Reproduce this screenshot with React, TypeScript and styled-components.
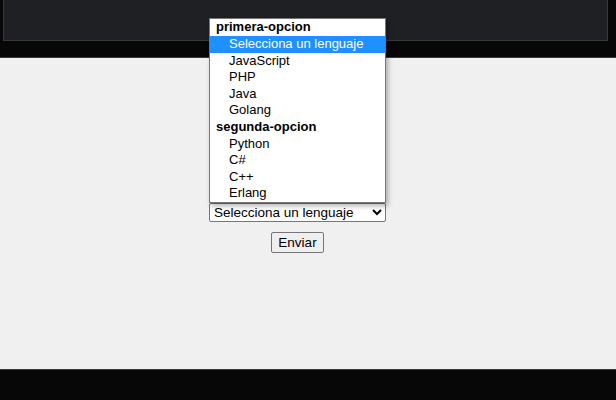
import React from 'react';
import styled, { createGlobalStyle } from 'styled-components';

const GlobalStyle = createGlobalStyle`
  html, body {
    margin: 0;
    padding: 0;
    background: #070707;
    font-family: "Liberation Sans", Arial, sans-serif;
  }
`;

const Shell = styled.div`
  display: flex;
  flex-direction: column;
  width: 616px;
  height: 400px;
  overflow: hidden;
`;

const TopBar = styled.div`
  display: flex;
  height: 41px;
  padding: 0 8px 0 3px;
  box-sizing: border-box;
  background: #070707;
`;

const TopPanel = styled.div`
  flex: 1;
  background: #1f2024;
  border: 1px solid #3a3a3c;
  border-top: none;
`;

const Band = styled.div`
  height: 17px;
  box-sizing: border-box;
  background: #070707;
  border-bottom: 1px solid #3a3a3c;
`;

const Main = styled.main`
  flex: 1;
  display: flex;
  flex-direction: column;
  align-items: center;
  padding: 145px 21px 0 0;
  background: #f0f0f0;
`;

const Footer = styled.footer`
  height: 31px;
  box-sizing: border-box;
  background: #070707;
  border-top: 1px solid #3a3a3c;
`;

const SelectWrap = styled.div`
  position: relative;
  width: 177px;
`;

const LanguageSelect = styled.select`
  display: block;
  width: 177px;
  height: 19px;
  margin: 0;
  padding: 0;
  box-sizing: border-box;
  border: 1px solid #767676;
  border-radius: 2px;
  background: #fff;
  color: #000;
  font-family: "Liberation Sans", Arial, sans-serif;
  font-size: 13.5px;
`;

const Dropdown = styled.ul`
  position: absolute;
  left: 0;
  bottom: 100%;
  width: 100%;
  margin: 0;
  padding: 0;
  list-style: none;
  box-sizing: border-box;
  background: #fff;
  border: 1px solid #767676;
  box-shadow: 2px 3px 5px rgba(0, 0, 0, 0.3);
  font-size: 13px;
  color: #000;
`;

const Row = styled.li<{ $group?: boolean; $active?: boolean }>`
  height: 16.6px;
  line-height: 16.6px;
  padding-left: ${(p) => (p.$group ? '6px' : '19px')};
  font-weight: ${(p) => (p.$group ? 700 : 400)};
  background: ${(p) => (p.$active ? '#1e90ff' : 'transparent')};
  color: ${(p) => (p.$active ? '#fff' : '#000')};
  white-space: nowrap;
`;

const SendButton = styled.button`
  margin-top: 10px;
  width: 53px;
  height: 21px;
  padding: 0;
  border: 1px solid #767676;
  border-radius: 2px;
  background: #efefef;
  color: #000;
  font-family: "Liberation Sans", Arial, sans-serif;
  font-size: 13.5px;
`;

const groups = [
  {
    label: 'primera-opcion',
    options: ['Selecciona un lenguaje', 'JavaScript', 'PHP', 'Java', 'Golang'],
  },
  {
    label: 'segunda-opcion',
    options: ['Python', 'C#', 'C++', 'Erlang'],
  },
];

const App: React.FC = () => {
  return (
    <Shell>
      <GlobalStyle />
      <TopBar>
        <TopPanel />
      </TopBar>
      <Band />
      <Main>
        <SelectWrap>
          <Dropdown>
            {groups.map((g) => (
              <React.Fragment key={g.label}>
                <Row $group>{g.label}</Row>
                {g.options.map((o, i) => (
                  <Row key={o} $active={g.label === 'primera-opcion' && i === 0}>
                    {o}
                  </Row>
                ))}
              </React.Fragment>
            ))}
          </Dropdown>
          <LanguageSelect defaultValue="">
            {groups.map((g) => (
              <optgroup key={g.label} label={g.label}>
                {g.options.map((o, i) => (
                  <option key={o} value={i === 0 && g.label === 'primera-opcion' ? '' : o}>
                    {o}
                  </option>
                ))}
              </optgroup>
            ))}
          </LanguageSelect>
        </SelectWrap>
        <SendButton type="button">Enviar</SendButton>
      </Main>
      <Footer />
    </Shell>
  );
};

export default App;
